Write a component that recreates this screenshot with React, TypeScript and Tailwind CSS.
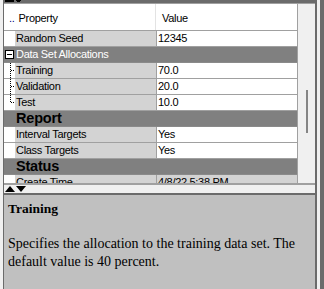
import React from "react";

const Gutter = ({ kind }: { kind: "none" | "mid" | "end" | "minus" }) => (
  <div className="w-[11px] h-full shrink-0">
    {kind === "mid" && (
      <svg width="11" height="15" shapeRendering="crispEdges">
        <line x1="6.5" y1="0" x2="6.5" y2="15" stroke="#000" strokeDasharray="1 1" />
        <line x1="7" y1="7.5" x2="11" y2="7.5" stroke="#000" strokeDasharray="1 1" />
      </svg>
    )}
    {kind === "end" && (
      <svg width="11" height="15" shapeRendering="crispEdges">
        <line x1="6.5" y1="0" x2="6.5" y2="8" stroke="#000" strokeDasharray="1 1" />
        <line x1="7" y1="7.5" x2="11" y2="7.5" stroke="#000" strokeDasharray="1 1" />
      </svg>
    )}
    {kind === "minus" && (
      <svg width="11" height="15" shapeRendering="crispEdges">
        <rect x="1.5" y="3.5" width="8" height="8" fill="#ffffff" stroke="#000" />
        <line x1="3" y1="7.5" x2="8" y2="7.5" stroke="#000" />
      </svg>
    )}
  </div>
);

const PropRow = ({
  name,
  value,
  tree = "none",
  readOnly = false,
}: {
  name: string;
  value: string;
  tree?: "none" | "mid" | "end";
  readOnly?: boolean;
}) => (
  <div className="flex h-[16px] shrink-0 border-b border-[#a0a0a0] bg-white">
    <Gutter kind={tree} />
    <div className="w-[141px] shrink-0 bg-[#d3d3d3] pl-px leading-[15px] whitespace-nowrap overflow-hidden">
      {name}
    </div>
    <div className="w-px shrink-0 bg-[#a0a0a0]" />
    <div
      className={`flex-1 pl-px leading-[15px] whitespace-nowrap overflow-hidden ${
        readOnly ? "bg-[#d3d3d3]" : "bg-white"
      }`}
    >
      {value}
    </div>
  </div>
);

const CatRow = ({ name, big = false, minus = false }: { name: string; big?: boolean; minus?: boolean }) => (
  <div className="flex h-[16px] shrink-0 border-b border-[#8a8a8a] bg-[#808080]">
    <Gutter kind={minus ? "minus" : "none"} />
    <div
      className={
        big
          ? "pl-px text-[14.5px] font-bold leading-[15px] text-black whitespace-nowrap tracking-[-0.2px]"
          : "pl-px leading-[15px] text-white whitespace-nowrap"
      }
    >
      {name}
    </div>
  </div>
);

export default function App() {
  return (
    <div className="w-[324px] h-[289px] flex overflow-hidden bg-[#f0f0f0] text-[11px] text-black tracking-[-0.3px] font-['Liberation_Sans',Arial,sans-serif]">
      <div className="w-[3px] shrink-0 bg-[#f0f0f0]" />
      <div className="w-px shrink-0 bg-[#6b6b6b]" />
      <div className="w-[311px] shrink-0 flex flex-col">
        {/* top strip */}
        <div className="h-[3px] shrink-0 bg-[#6b6b6b] flex pl-px">
          <svg width="16" height="3" shapeRendering="crispEdges">
            <polygon points="0,0 9,0 9,2 0,2" fill="#000" />
            <polygon points="10,0 16,0 14,2 12,2" fill="#000" />
          </svg>
        </div>
        <div className="h-px shrink-0 bg-[#a0a0a0]" />
        {/* grid area */}
        <div className="h-[179px] shrink-0 flex overflow-hidden">
          <div className="w-[293px] shrink-0 flex flex-col overflow-hidden">
            {/* header */}
            <div className="h-[27px] shrink-0 flex bg-white border-b border-[#a0a0a0]">
              <div className="w-[151px] shrink-0 flex pt-[7px] leading-[15px]">
                <span className="ml-[5px] text-[#000080]">..</span>
                <span className="ml-[4px]">Property</span>
              </div>
              <div className="w-px shrink-0 bg-[#e3e3e3]" />
              <div className="flex-1 pt-[7px] pl-[6px] leading-[15px]">Value</div>
            </div>
            <PropRow name="Random Seed" value="12345" />
            <CatRow name="Data Set Allocations" minus />
            <PropRow name="Training" value="70.0" tree="mid" />
            <PropRow name="Validation" value="20.0" tree="mid" />
            <PropRow name="Test" value="10.0" tree="end" />
            <CatRow name="Report" big />
            <PropRow name="Interval Targets" value="Yes" />
            <PropRow name="Class Targets" value="Yes" />
            <CatRow name="Status" big />
            <PropRow name="Create Time" value="4/8/22 5:38 PM" readOnly />
          </div>
          <div className="w-px shrink-0 bg-[#a0a0a0]" />
          <div className="w-[17px] shrink-0 bg-[#f0f0f0] pl-[8px] pt-[86px]">
            <div className="w-[2px] h-[43px] bg-[#858585]" />
          </div>
        </div>
        <div className="h-[2px] shrink-0 bg-[#a0a0a0]" />
        {/* splitter */}
        <div className="h-[8px] shrink-0 bg-[#f0f0f0] flex pl-px pt-px">
          <svg width="22" height="6">
            <polygon points="0,6 5,0 10,6" fill="#000" />
            <polygon points="11,0 21,0 16,6" fill="#000" />
          </svg>
        </div>
        <div className="h-[2px] shrink-0 bg-[#6b6b6b]" />
        {/* description */}
        <div className="flex-1 bg-[#c0c0c0] pl-[4px] pt-[5px] tracking-normal font-['Liberation_Serif','Times_New_Roman',serif] text-black">
          <div className="text-[13.5px] font-bold leading-[18px]">Training</div>
          <div className="mt-[17px] text-[14px] leading-[18px] w-[300px]">
            Specifies the allocation to the training data set. The default value is 40 percent.
          </div>
        </div>
      </div>
      <div className="w-[2px] shrink-0 bg-[#6b6b6b]" />
      <div className="w-[3px] shrink-0 bg-[#f0f0f0]" />
      <div className="w-[4px] shrink-0 bg-[#6b6b6b]" />
    </div>
  );
}
